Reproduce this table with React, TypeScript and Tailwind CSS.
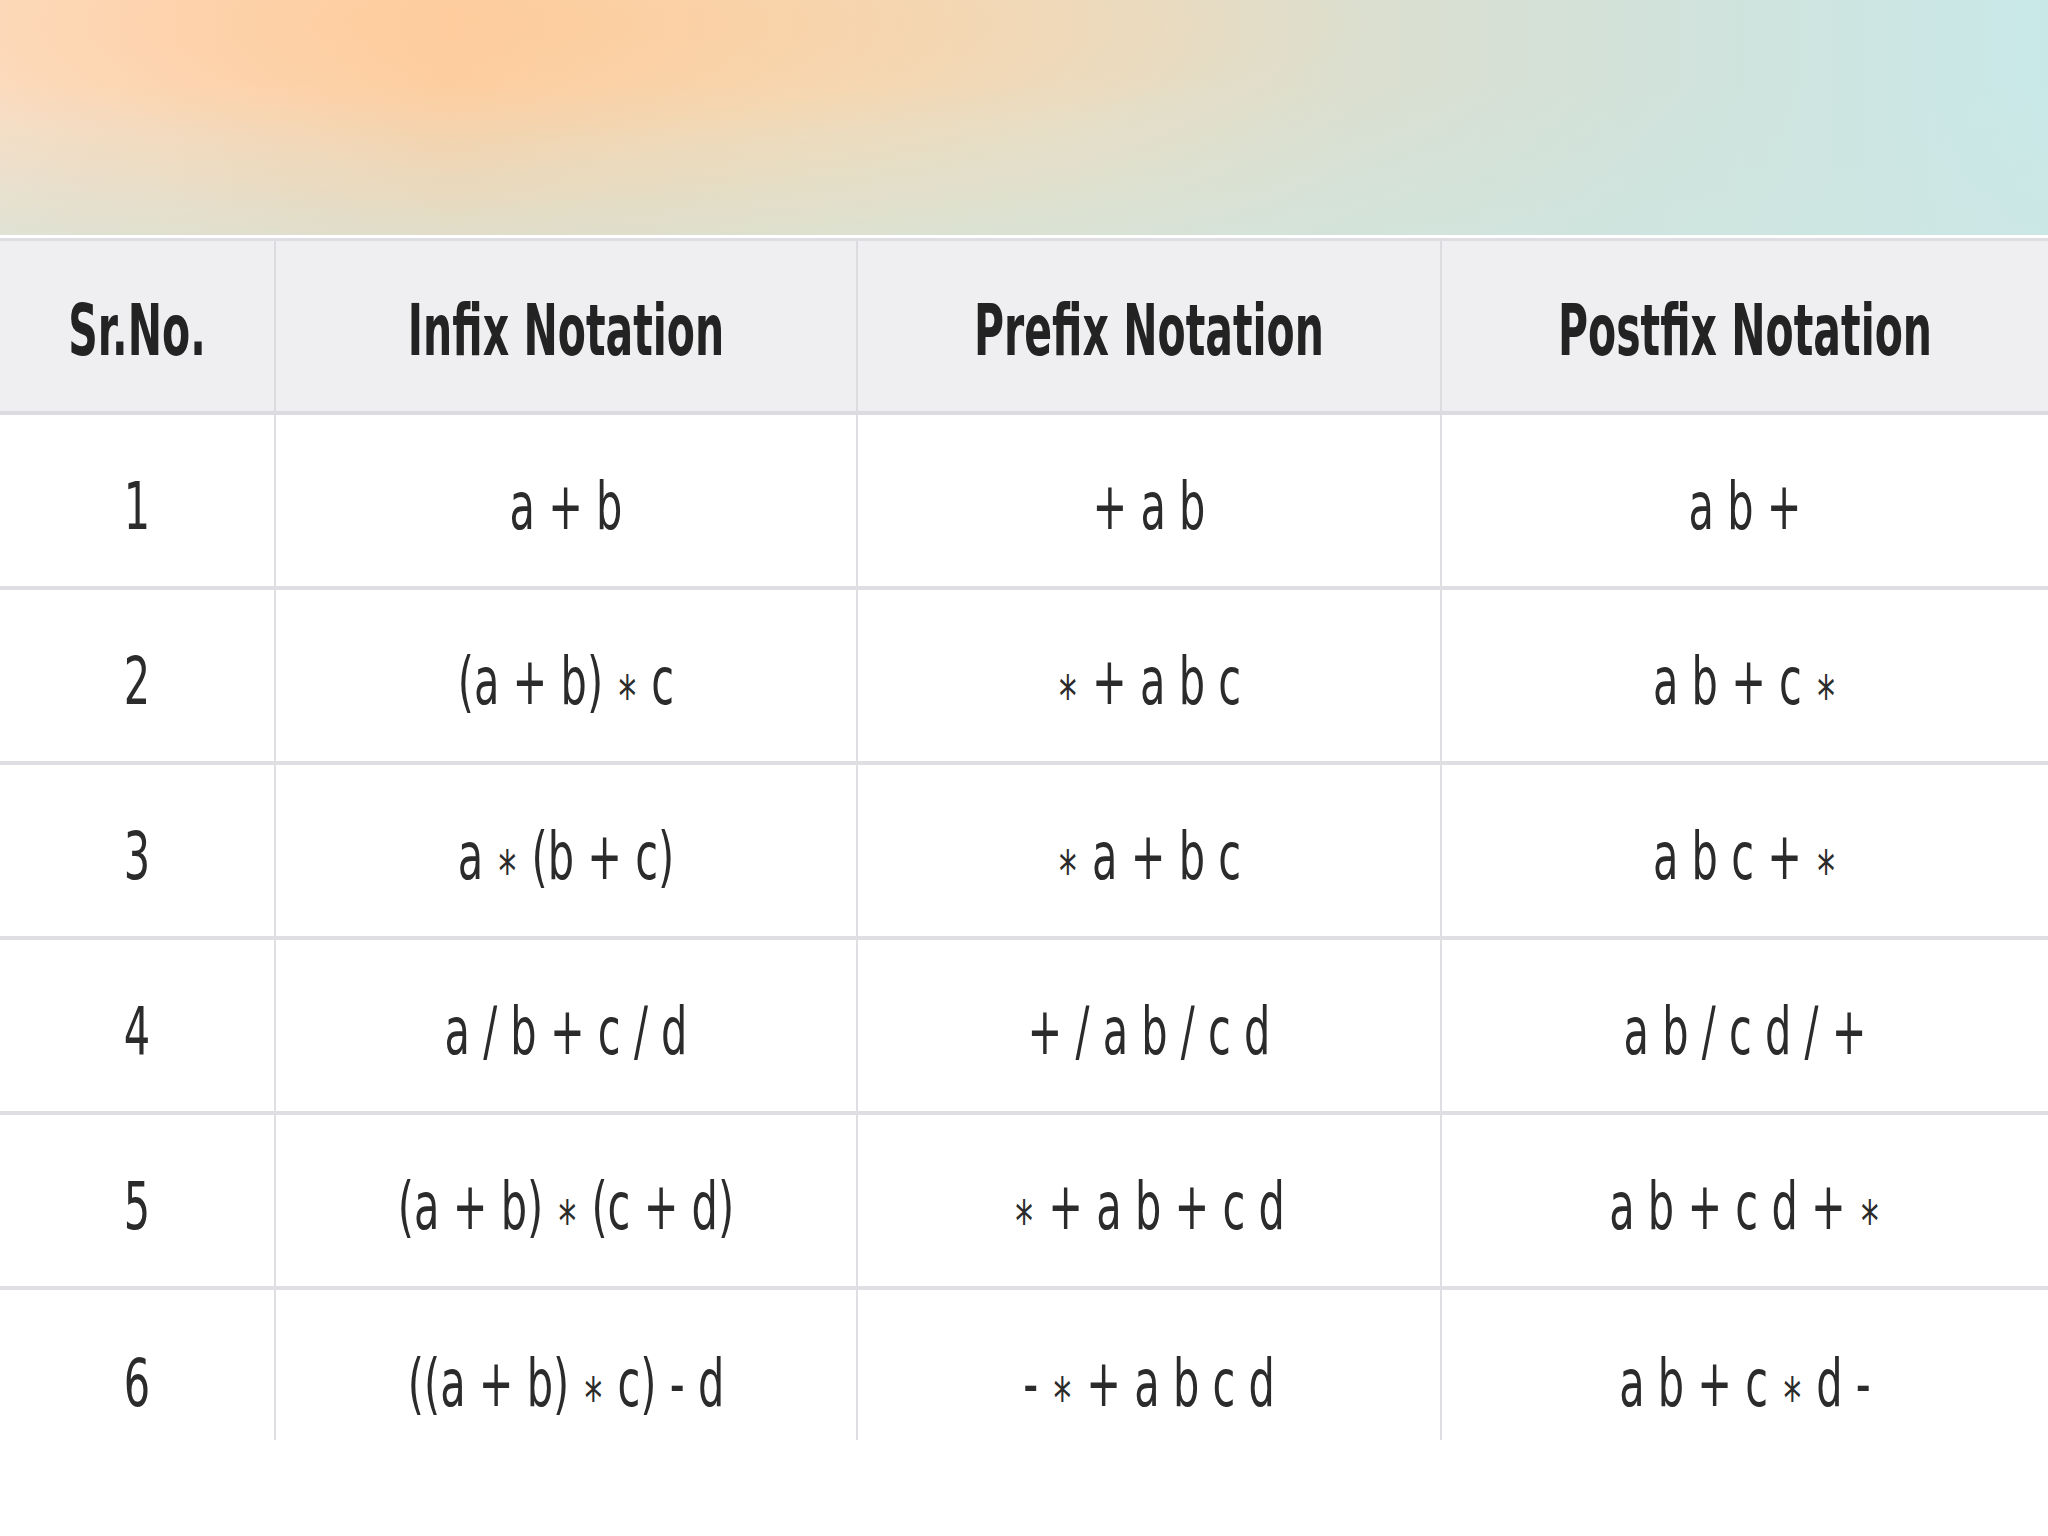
import React from "react";

const rows: [string, string, string, string][] = [
  ["1", "a + b", "+ a b", "a b +"],
  ["2", "(a + b) * c", "* + a b c", "a b + c *"],
  ["3", "a * (b + c)", "* a + b c", "a b c + *"],
  ["4", "a / b + c / d", "+ / a b / c d", "a b / c d / +"],
  ["5", "(a + b) * (c + d)", "* + a b + c d", "a b + c d + *"],
  ["6", "((a + b) * c) - d", "- * + a b c d", "a b + c * d -"],
];

const headers = ["Sr.No.", "Infix Notation", "Prefix Notation", "Postfix Notation"];

function Expr({ text }: { text: string }) {
  const parts = text.split("*");
  return (
    <>
      {parts.map((p, i) => (
        <React.Fragment key={i}>
          {p}
          {i < parts.length - 1 && (
            <span className="relative top-[0.24em] text-[0.85em] px-[0.06em]">*</span>
          )}
        </React.Fragment>
      ))}
    </>
  );
}

export default function App() {
  return (
    <div className="w-[2048px] h-[1536px] bg-white overflow-hidden" style={{ fontFamily: '"DejaVu Sans", Verdana, sans-serif' }}>
      <div className="relative h-[235px] w-full bg-[linear-gradient(90deg,#fcdcc0_0%,#fdcfa2_22%,#f6d8b2_38%,#ecdcc0_52%,#dcdfcf_66%,#d2e2da_80%,#c8e8e8_100%)]">
        <div className="absolute inset-0 bg-[linear-gradient(180deg,rgba(255,255,255,0)_0%,rgba(255,255,255,0)_35%,rgba(205,230,226,0.6)_100%)]" />
        <div className="absolute inset-0 bg-[radial-gradient(ellipse_at_25%_10%,rgba(255,200,150,0.45),rgba(255,200,150,0)_40%)]" />
      </div>
      <div className="h-[3px] bg-white" />
      <div className="h-[3px] bg-[#dedee2]" />
      <div className="grid grid-cols-[276px_582px_584px_1fr]">
        {headers.map((h, i) => (
          <div
            key={h}
            className={`h-[174px] pt-[10px] bg-[#efeff1] flex items-center justify-center border-b-[4px] border-[#dcdce0] ${i < 3 ? "border-r-2" : ""}`}
          >
            <span className="inline-block whitespace-nowrap text-[41px] font-bold text-[#232323] scale-y-[1.74] leading-none">
              {h}
            </span>
          </div>
        ))}
        {rows.map((r, ri) =>
          r.map((c, ci) => {
            const last = ri === rows.length - 1;
            return (
              <div
                key={`${ri}-${ci}`}
                className={`flex items-center justify-center border-[#dfdfe3] ${
                  last ? "h-[150px] pt-[36px]" : "h-[175px] pt-[10px] border-b-[4px]"
                } ${ci < 3 ? "border-r-2" : ""}`}
              >
                <span className="inline-block whitespace-nowrap text-[41.5px] text-[#2b2b2b] scale-y-[1.6] leading-none">
                  <Expr text={c} />
                </span>
              </div>
            );
          })
        )}
      </div>
    </div>
  );
}
